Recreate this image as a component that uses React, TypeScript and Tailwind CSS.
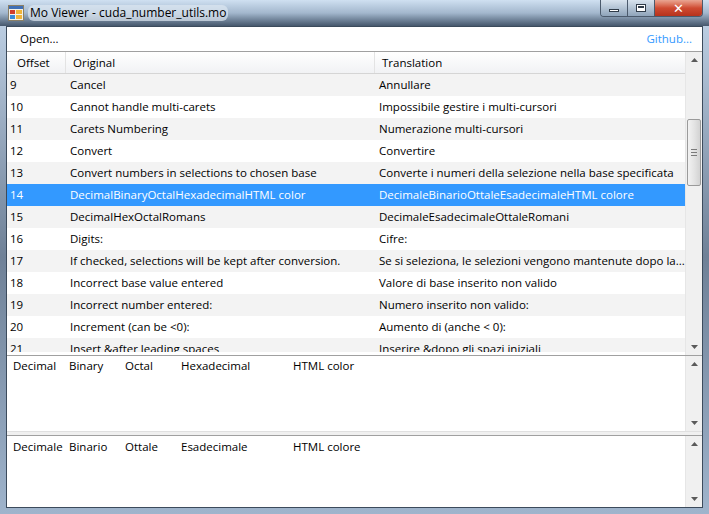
import React from "react";

const rows: [number, string, string][] = [
  [9, "Cancel", "Annullare"],
  [10, "Cannot handle multi-carets", "Impossibile gestire i multi-cursori"],
  [11, "Carets Numbering", "Numerazione multi-cursori"],
  [12, "Convert", "Convertire"],
  [13, "Convert numbers in selections to chosen base", "Converte i numeri della selezione nella base specificata"],
  [14, "DecimalBinaryOctalHexadecimalHTML color", "DecimaleBinarioOttaleEsadecimaleHTML colore"],
  [15, "DecimalHexOctalRomans", "DecimaleEsadecimaleOttaleRomani"],
  [16, "Digits:", "Cifre:"],
  [17, "If checked, selections will be kept after conversion.", "Se si seleziona, le selezioni vengono mantenute dopo la..."],
  [18, "Incorrect base value entered", "Valore di base inserito non valido"],
  [19, "Incorrect number entered:", "Numero inserito non valido:"],
  [20, "Increment (can be <0):", "Aumento di (anche < 0):"],
  [21, "Insert &after leading spaces", "Inserire &dopo gli spazi iniziali"],
];

function Up() {
  return (
    <svg width="7" height="4" viewBox="0 0 7 4"><path d="M0 4 L3.5 0 L7 4 Z" fill="#5a5a5a" /></svg>
  );
}
function Down() {
  return (
    <svg width="7" height="4" viewBox="0 0 7 4"><path d="M0 0 L3.5 4 L7 0 Z" fill="#5a5a5a" /></svg>
  );
}

function VScroll({ thumb }: { thumb?: [number, number] }) {
  return (
    <div className="relative flex h-full w-[17px] flex-col items-center justify-between bg-[#f0f0f0] py-[6px] border-l border-[#e6e6e6]">
      <Up />
      <Down />
      {thumb ? (
        <div
          className="absolute left-[1px] w-[14px] rounded-[2px] border border-[#9a9a9a] bg-gradient-to-r from-[#f2f2f2] via-[#e4e4e4] to-[#d3d3d3] flex items-center justify-center"
          style={{ top: thumb[0], height: thumb[1] }}
        >
          <div className="flex flex-col gap-[2px]">
            <div className="h-px w-[6px] bg-[#7a7a7a]" />
            <div className="h-px w-[6px] bg-[#7a7a7a]" />
            <div className="h-px w-[6px] bg-[#7a7a7a]" />
          </div>
        </div>
      ) : null}
    </div>
  );
}

function AppIcon() {
  return (
    <svg width="16" height="16" viewBox="0 0 16 16">
      <rect x="0.5" y="0.5" width="15" height="15" fill="#f4f1e6" stroke="#8a7f66" />
      <rect x="1" y="1" width="14" height="3" fill="#3f6fb5" />
      <rect x="2" y="5" width="5" height="4" fill="#d23c2c" />
      <rect x="8" y="5" width="6" height="4" fill="#f0b43a" />
      <rect x="2" y="10" width="5" height="4" fill="#3c8ad8" />
      <rect x="8" y="10" width="6" height="4" fill="#f0b43a" />
    </svg>
  );
}

export default function App() {
  return (
    <div
      className="relative flex h-[514px] w-[709px] flex-col overflow-hidden bg-gradient-to-b from-[#c4d6ea] via-[#6f8197] to-[#9fb4cc] text-[11.5px] text-black"
      style={{ fontFamily: '"Open Sans", "Noto Sans", sans-serif' }}
    >
      {/* title bar */}
      <div className="relative flex h-[26px] items-center bg-gradient-to-b from-[#cfe0f1] via-[#a3b7cd] to-[#46586d] pl-[8px]">
        <AppIcon />
        <span className="ml-[4px] rounded-[6px] bg-[#dde7f1]/70 px-[2px] text-[12px] leading-[16px] text-black">Mo Viewer - cuda_number_utils.mo</span>
        <div className="absolute right-[6px] top-0 flex h-[17px] overflow-hidden rounded-b-[4px] border border-t-0 border-[#4b5a6c]">
          <div className="flex w-[27px] items-center justify-center bg-gradient-to-b from-[#d8e3ee] to-[#8fa4ba] border-r border-[#4b5a6c]">
            <div className="mt-[5px] h-[3px] w-[10px] border border-[#2f3b48] bg-white" />
          </div>
          <div className="flex w-[27px] items-center justify-center bg-gradient-to-b from-[#d8e3ee] to-[#8fa4ba] border-r border-[#4b5a6c]">
            <div className="h-[8px] w-[10px] border border-[#2f3b48] bg-white p-[1px]">
              <div className="h-full w-full border-t-2 border-[#2f3b48]" />
            </div>
          </div>
          <div className="flex w-[47px] items-center justify-center bg-gradient-to-b from-[#e9a592] via-[#cf4b32] to-[#b7321c]">
            <span className="text-[13px] font-bold leading-none text-white" style={{ fontFamily: '"DejaVu Sans", sans-serif' }}>✕</span>
          </div>
        </div>
      </div>

      {/* client */}
      <div className="mx-[6px] mb-[6px] flex flex-1 flex-col border border-[#3c4b5c] bg-white">
        {/* menu strip */}
        <div className="flex h-[24px] items-center justify-between bg-white pl-[13px] pr-[10px]">
          <span>Open...</span>
          <span className="text-[#3399ff]">Github...</span>
        </div>

        {/* list view */}
        <div className="flex h-[304px] border-t border-[#a0a0a0] bg-white">
          <div className="flex flex-1 flex-col overflow-hidden border-b-[3px] border-white">
            <div className="flex h-[22px] shrink-0 items-center border-b border-[#d5d5d5] bg-gradient-to-b from-white to-[#f1f2f4]">
              <div className="flex h-full w-[59px] items-center border-r border-[#e3e3e3] pl-[10px]">Offset</div>
              <div className="flex h-full w-[309px] items-center border-r border-[#e3e3e3] pl-[7px]">Original</div>
              <div className="flex h-full flex-1 items-center pl-[7px]">Translation</div>
            </div>
            {rows.map(([o, a, b]) => {
              const sel = o === 14;
              const bg = sel ? "bg-[#3399ff] text-white" : o % 2 === 1 ? "bg-[#f3f3f3]" : "bg-white";
              return (
                <div key={o} className={`flex h-[22px] shrink-0 items-center whitespace-nowrap ${bg}`}>
                  <div className="w-[59px] pl-[3px]">{o}</div>
                  <div className="w-[309px] pl-[4px]">{a}</div>
                  <div className="flex-1 overflow-hidden pl-[4px]">{b}</div>
                </div>
              );
            })}
          </div>
          <VScroll thumb={[67, 67]} />
        </div>

        {/* source pane */}
        <div className="flex h-[76px] border-t border-[#a0a0a0] bg-white">
          <div className="flex flex-1 items-start whitespace-nowrap pl-[6px] pt-[1px]">
            <span className="w-[56px]">Decimal</span>
            <span className="w-[56px]">Binary</span>
            <span className="w-[56px]">Octal</span>
            <span className="w-[112px]">Hexadecimal</span>
            <span>HTML color</span>
          </div>
          <VScroll />
        </div>

        {/* splitter */}
        <div className="h-[5px] border-t border-[#e0e0e0] border-b border-b-[#a0a0a0] bg-[#f0f0f0]" />

        {/* translation pane */}
        <div className="flex flex-1 bg-white">
          <div className="flex flex-1 items-start whitespace-nowrap pl-[6px] pt-[2px]">
            <span className="w-[56px]">Decimale</span>
            <span className="w-[56px]">Binario</span>
            <span className="w-[56px]">Ottale</span>
            <span className="w-[112px]">Esadecimale</span>
            <span>HTML colore</span>
          </div>
          <VScroll />
        </div>
      </div>
    </div>
  );
}
